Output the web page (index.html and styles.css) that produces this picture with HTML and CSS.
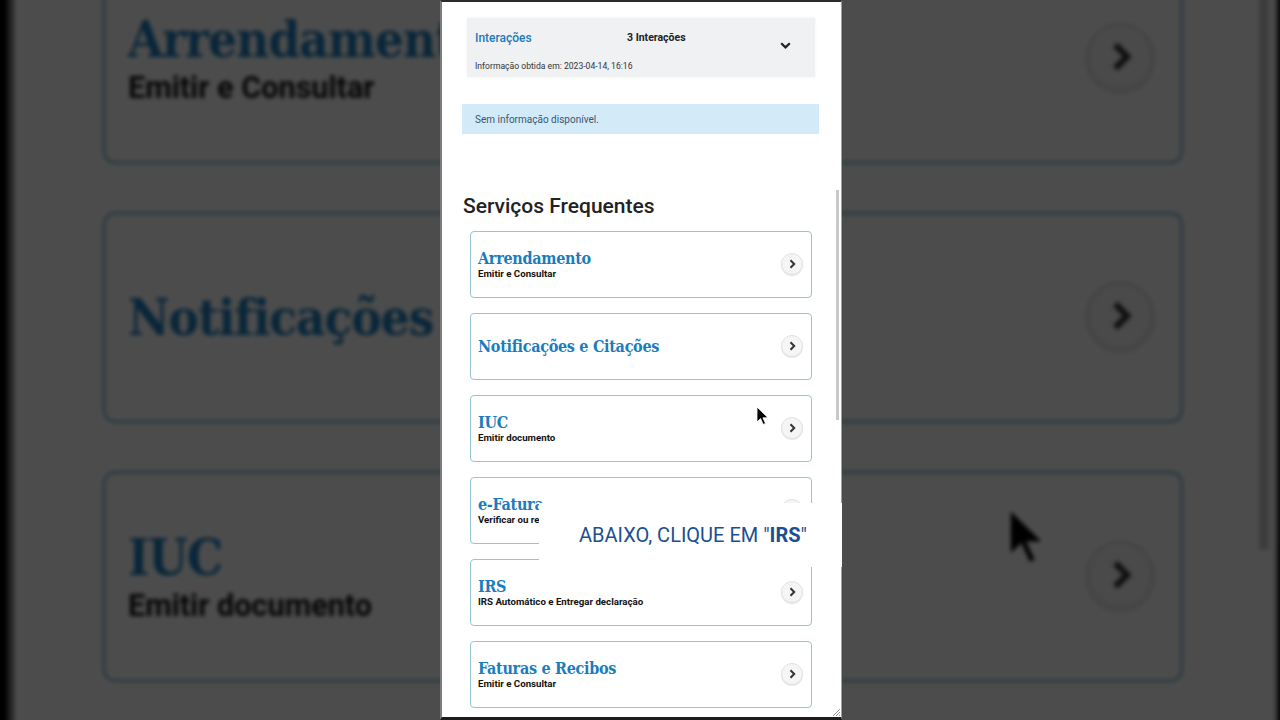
FILE: index.html
```html
<!DOCTYPE html>
<html lang="pt">
<head>
    <meta charset="UTF-8">
    <meta name="viewport" content="width=device-width, initial-scale=1.0">
    <title>Serviços Frequentes</title>
    <link rel="stylesheet" href="styles.css">
</head>
<body>
    <div class="stage">

        <!-- blurred, zoomed copy of the screen behind it (video backdrop) -->
        <div class="phone backdrop" aria-hidden="true">
            <div class="page">
                <div class="interactions">
                    <span class="int_title">Interações</span>
                    <span class="int_count">3 Interações</span>
                    <span class="int_toggle"><svg width="11" height="7" viewBox="0 0 11 7"><path d="M1.2 1.2 5.5 5.4 9.8 1.2" fill="none" stroke="#222" stroke-width="2.2"/></svg></span>
                    <span class="int_info">Informação obtida em: 2023-04-14, 16:16</span>
                </div>
                <div class="alert">Sem informação disponível.</div>
                <h2>Serviços Frequentes</h2>
                <div class="services">
                    <a class="service"><span class="service_text"><span class="service_title">Arrendamento</span><span class="service_sub">Emitir e Consultar</span></span><span class="go"><svg width="7" height="10" viewBox="0 0 7 10"><path d="M1.5 1.3 5.2 5 1.5 8.7" fill="none" stroke="#333" stroke-width="2"/></svg></span></a>
                    <a class="service"><span class="service_text"><span class="service_title">Notificações e Citações</span></span><span class="go"><svg width="7" height="10" viewBox="0 0 7 10"><path d="M1.5 1.3 5.2 5 1.5 8.7" fill="none" stroke="#333" stroke-width="2"/></svg></span></a>
                    <a class="service"><span class="service_text"><span class="service_title">IUC</span><span class="service_sub">Emitir documento</span></span><span class="go"><svg width="7" height="10" viewBox="0 0 7 10"><path d="M1.5 1.3 5.2 5 1.5 8.7" fill="none" stroke="#333" stroke-width="2"/></svg></span></a>
                    <a class="service"><span class="service_text"><span class="service_title">e-Fatura</span><span class="service_sub">Verificar ou registar faturas</span></span><span class="go"><svg width="7" height="10" viewBox="0 0 7 10"><path d="M1.5 1.3 5.2 5 1.5 8.7" fill="none" stroke="#333" stroke-width="2"/></svg></span></a>
                    <a class="service"><span class="service_text"><span class="service_title">IRS</span><span class="service_sub">IRS Automático e Entregar declaração</span></span><span class="go"><svg width="7" height="10" viewBox="0 0 7 10"><path d="M1.5 1.3 5.2 5 1.5 8.7" fill="none" stroke="#333" stroke-width="2"/></svg></span></a>
                    <a class="service"><span class="service_text"><span class="service_title">Faturas e Recibos</span><span class="service_sub">Emitir e Consultar</span></span><span class="go"><svg width="7" height="10" viewBox="0 0 7 10"><path d="M1.5 1.3 5.2 5 1.5 8.7" fill="none" stroke="#333" stroke-width="2"/></svg></span></a>
                </div>
            </div>
            <div class="thumb"></div>
            <svg class="pointer" width="13" height="20" viewBox="0 0 13 20"><path d="M1 1v15l3.6-3.4 2.6 5.8 2.3-1-2.6-5.6H12z" fill="#000" stroke="#fff" stroke-width="0.8"/></svg>
        </div>

        <div class="phone">
            <div class="page">
                <div class="interactions">
                    <span class="int_title">Interações</span>
                    <span class="int_count">3 Interações</span>
                    <span class="int_toggle"><svg width="11" height="7" viewBox="0 0 11 7"><path d="M1.2 1.2 5.5 5.4 9.8 1.2" fill="none" stroke="#222" stroke-width="2.2"/></svg></span>
                    <span class="int_info">Informação obtida em: 2023-04-14, 16:16</span>
                </div>
                <div class="alert">Sem informação disponível.</div>
                <h2>Serviços Frequentes</h2>
                <div class="services">
                    <a class="service" href="#"><span class="service_text"><span class="service_title">Arrendamento</span><span class="service_sub">Emitir e Consultar</span></span><span class="go"><svg width="7" height="10" viewBox="0 0 7 10"><path d="M1.5 1.3 5.2 5 1.5 8.7" fill="none" stroke="#333" stroke-width="2"/></svg></span></a>
                    <a class="service" href="#"><span class="service_text"><span class="service_title">Notificações e Citações</span></span><span class="go"><svg width="7" height="10" viewBox="0 0 7 10"><path d="M1.5 1.3 5.2 5 1.5 8.7" fill="none" stroke="#333" stroke-width="2"/></svg></span></a>
                    <a class="service" href="#"><span class="service_text"><span class="service_title">IUC</span><span class="service_sub">Emitir documento</span></span><span class="go"><svg width="7" height="10" viewBox="0 0 7 10"><path d="M1.5 1.3 5.2 5 1.5 8.7" fill="none" stroke="#333" stroke-width="2"/></svg></span></a>
                    <a class="service" href="#"><span class="service_text"><span class="service_title">e-Fatura</span><span class="service_sub">Verificar ou registar faturas</span></span><span class="go"><svg width="7" height="10" viewBox="0 0 7 10"><path d="M1.5 1.3 5.2 5 1.5 8.7" fill="none" stroke="#333" stroke-width="2"/></svg></span></a>
                    <a class="service" href="#"><span class="service_text"><span class="service_title">IRS</span><span class="service_sub">IRS Automático e Entregar declaração</span></span><span class="go"><svg width="7" height="10" viewBox="0 0 7 10"><path d="M1.5 1.3 5.2 5 1.5 8.7" fill="none" stroke="#333" stroke-width="2"/></svg></span></a>
                    <a class="service" href="#"><span class="service_text"><span class="service_title">Faturas e Recibos</span><span class="service_sub">Emitir e Consultar</span></span><span class="go"><svg width="7" height="10" viewBox="0 0 7 10"><path d="M1.5 1.3 5.2 5 1.5 8.7" fill="none" stroke="#333" stroke-width="2"/></svg></span></a>
                </div>
            </div>
            <div class="thumb"></div>
            <svg class="pointer" width="13" height="20" viewBox="0 0 13 20"><path d="M1 1v15l3.6-3.4 2.6 5.8 2.3-1-2.6-5.6H12z" fill="#000" stroke="#fff" stroke-width="0.8"/></svg>
            <svg class="grip" width="10" height="10" viewBox="0 0 10 10"><path d="M9 2 2 9M9 5 5 9M9 8 8 9" stroke="#9a9a9a" stroke-width="1"/></svg>
        </div>

        <div class="caption">ABAIXO, CLIQUE EM "<b>IRS</b>"</div>
    </div>
</body>
</html>
```

FILE: styles.css
```css
body {
    margin: 0;
    background-color: #000;
}

.stage {
    display: grid;
    position: relative;
    width: 1280px;
    height: 720px;
    overflow: hidden;
    background-color: #000;
}

.phone {
    grid-area: 1 / 1;
    position: relative;
    width: 402px;
    height: 720px;
    margin-left: 440px;
    box-sizing: border-box;
    overflow: hidden;
    background-color: #fff;
    border-left: 2px solid #7c7c7c;
    border-right: 1px solid #a0a0a0;
    border-top: 2px solid #2b2b2b;
    border-bottom: 3px solid #1c1c1c;
    font-family: Roboto, "Noto Sans", sans-serif;
    color: #222;
}

.backdrop {
    transform: translateX(2px) scale(3.16);
    filter: blur(0.7px) brightness(0.3);
}

.page {
    padding: 16px 22px 0 20px;
}

.interactions {
    display: grid;
    grid-template-columns: 152px 1fr 20px;
    margin: 0 4px 0 5px;
    padding: 12px 20px 5px 8px;
    background-color: #eff1f3;
    box-shadow: 0 0 3px rgba(0, 0, 0, 0.06);
}

.int_title {
    grid-column: 1;
    grid-row: 1;
    font-size: 12px;
    line-height: 16px;
    font-weight: 500;
    color: #1c7ab8;
}

.int_count {
    grid-column: 2;
    grid-row: 1;
    margin-top: 1px;
    font-size: 10.5px;
    line-height: 14px;
    font-weight: 700;
    color: #222;
}

.int_toggle {
    grid-column: 3;
    grid-row: 1 / 3;
    align-self: start;
    justify-self: center;
    margin-top: 12px;
    display: flex;
}

.int_info {
    grid-column: 1 / 3;
    grid-row: 2;
    margin-top: 14px;
    font-size: 8.6px;
    line-height: 12px;
    color: #333;
}

.alert {
    margin-top: 27px;
    height: 30px;
    padding: 0 13px;
    display: flex;
    align-items: center;
    background-color: #d3ebf8;
    color: #3a5672;
    font-size: 10px;
}

h2 {
    margin: 60px 0 13px 1px;
    font-size: 21px;
    line-height: 24px;
    font-weight: 500;
    color: #222;
}

.services {
    display: flex;
    flex-direction: column;
    gap: 15px;
    margin: 0 7px 0 8px;
}

.service {
    display: flex;
    align-items: center;
    justify-content: space-between;
    height: 67px;
    box-sizing: border-box;
    padding: 0 8px 0 7px;
    border: 1px solid #94c4d6;
    border-radius: 4px;
    text-decoration: none;
    background-color: #fff;
}

.service_text {
    display: flex;
    flex-direction: column;
    white-space: nowrap;
}

.service_title {
    font-family: "DejaVu Serif Condensed", "DejaVu Serif", serif;
    font-weight: 700;
    font-size: 16px;
    line-height: 17px;
    letter-spacing: -0.3px;
    color: #1a7cbd;
}

.service_sub {
    margin-top: 1px;
    font-size: 9.7px;
    line-height: 11px;
    font-weight: 700;
    color: #111;
}

.go {
    display: flex;
    align-items: center;
    justify-content: center;
    width: 22px;
    height: 22px;
    margin-top: -2px;
    box-sizing: border-box;
    border-radius: 50%;
    background-color: #f5f5f5;
    border: 1px solid #e3e3e3;
    box-shadow: 0 1px 1px rgba(0, 0, 0, 0.1);
}

.go svg {
    margin-left: 1px;
}

.thumb {
    position: absolute;
    right: 2px;
    top: 188px;
    width: 3px;
    height: 230px;
    background-color: #c8c8c8;
}

.pointer {
    position: absolute;
    left: 314px;
    top: 404px;
}

.grip {
    position: absolute;
    right: 0;
    bottom: 0;
}

.caption {
    position: absolute;
    left: 539px;
    top: 503px;
    width: 303px;
    height: 64px;
    display: flex;
    align-items: center;
    justify-content: center;
    padding-left: 5px;
    box-sizing: border-box;
    background-color: #fff;
    font-family: Roboto, "Noto Sans", sans-serif;
    font-size: 20px;
    color: #1b4f91;
}

.caption b {
    font-weight: 700;
}
```
